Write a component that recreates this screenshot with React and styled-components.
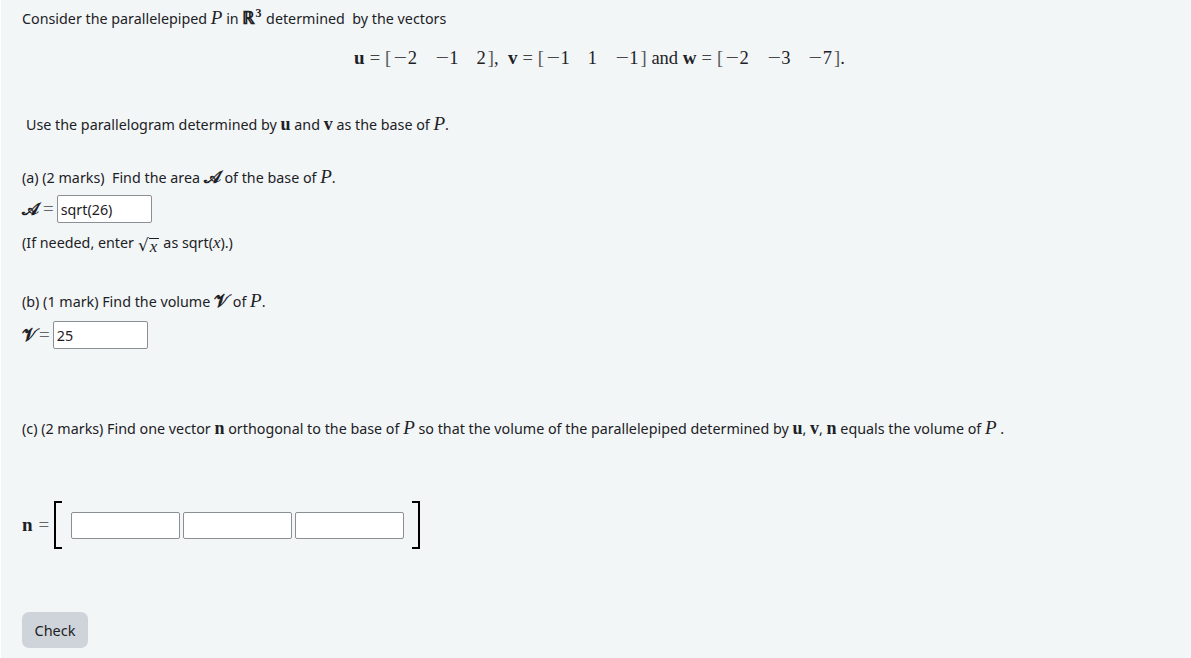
import React from "react";
import styled, { createGlobalStyle } from "styled-components";

const GlobalStyle = createGlobalStyle`
  html, body { margin: 0; padding: 0; background: #f2f6f7; }
  body { font-family: "Noto Sans", "Open Sans", sans-serif; color: #1d2125; }
`;

const Page = styled.div`
  min-height: 658px;
  box-sizing: border-box;
  padding: 8px 22px 8px 21px;
  background: #f2f6f7;
  border-left: 1px solid #ffffff;
  font-size: 14.3px;
`;

const Para = styled.div`
  line-height: 22px;
  height: 22px;
  margin-top: ${(p) => p.$mt || 0}px;
  padding-left: ${(p) => p.$indent || 0}px;
  white-space: pre;
`;

const Display = styled.div`
  margin-top: ${(p) => p.$mt || 0}px;
  line-height: 24px;
  height: 24px;
  text-align: center;
  font-family: "Liberation Serif", "DejaVu Serif", serif;
  font-size: 18.5px;
  white-space: pre;
  padding-left: 8px;
`;

const MI = styled.span`
  font-family: "Liberation Serif", "DejaVu Serif", serif;
  font-style: italic;
  font-size: ${(p) => p.$size || 19}px;
  line-height: 0;
`;

const MB = styled.span`
  font-family: "Liberation Serif", "DejaVu Serif", serif;
  font-weight: bold;
  font-size: ${(p) => p.$size || 18}px;
  line-height: 0;
`;

const MR = styled.span`
  font-family: "Liberation Serif", "DejaVu Serif", serif;
  line-height: 0;
  margin: 0 ${(p) => p.$space || 0}px;
  color: #444;
`;

const Cal = styled.span`
  font-family: "DejaVu Serif", "DejaVu Sans", serif;
  font-size: 18px;
  font-weight: bold;
  line-height: 0;
`;

const Sup = styled.sup`
  font-family: "Liberation Serif", serif;
  font-weight: bold;
  font-size: 12px;
  vertical-align: 7px;
  line-height: 0;
  margin-right: 1px;
`;

const Entry = styled.span`
  display: inline-block;
  padding: 0 ${(p) => p.$r ?? 9}px 0 ${(p) => p.$l ?? 9}px;
`;

const Minus = styled.span`
  display: inline-block;
  width: 0.78em;
  text-align: center;
  transform: scaleX(1.3);
`;

const Bracket = styled.span`
  color: #555;
`;

const AnswerRow = styled.div`
  display: flex;
  align-items: center;
  margin-top: ${(p) => p.$mt || 0}px;
  height: 28px;
`;

const Eq = styled.span`
  font-family: "Liberation Serif", serif;
  font-size: 19px;
  color: #666;
  margin: 0 ${(p) => p.$r ?? 2}px 0 ${(p) => p.$l ?? 4}px;
`;

const TextInput = styled.input`
  box-sizing: border-box;
  width: ${(p) => p.$w || 95}px;
  height: ${(p) => p.$h || 28}px;
  border: 1px solid #8a8f94;
  border-radius: 2px;
  background: #fff;
  font-family: "Noto Sans", sans-serif;
  font-size: 14.3px;
  color: #1d2125;
  padding: 0 3px;
  outline: none;
`;

const SqrtWrap = styled.span`
  font-family: "DejaVu Serif", serif;
  display: inline-flex;
  align-items: flex-start;
  margin: 0 4px 0 4px;
  line-height: 0;
  vertical-align: -3px;
`;

const SqrtSign = styled.span`
  font-size: 17px;
  line-height: 18px;
`;

const Radicand = styled.span`
  border-top: 1px solid #1d2125;
  font-family: "Liberation Serif", serif;
  font-style: italic;
  font-size: 17px;
  line-height: 16px;
  padding: 0 2px 0 1px;
  margin-top: 2px;
`;

const MatrixRow = styled.div`
  display: flex;
  align-items: center;
  margin-top: ${(p) => p.$mt || 0}px;
  height: 48px;
`;

const BigBracket = styled.span`
  box-sizing: border-box;
  width: 8px;
  height: 48px;
  border: 2.5px solid #000;
  ${(p) => (p.$side === "left" ? "border-right: none;" : "border-left: none;")}
`;

const Cells = styled.div`
  display: flex;
  gap: 3px;
  margin: 0 8px 0 9px;
`;

const CheckButton = styled.button`
  display: block;
  margin-top: ${(p) => p.$mt || 0}px;
  width: 66px;
  height: 36px;
  border: none;
  border-radius: 7px;
  background: #ced4da;
  color: #1d2125;
  font-family: "Noto Sans", sans-serif;
  font-size: 14.5px;
  padding: 0;
`;

const M = () => <Minus>−</Minus>;

function RowVec({ values }) {
  return (
    <>
      <Bracket>[</Bracket>
      {values.map((v, i) => (
        <Entry key={i} $l={i === 0 ? 2 : 9} $r={i === values.length - 1 ? 2 : 9}>
          {v.startsWith("-") ? (
            <>
              <M />
              {v.slice(1)}
            </>
          ) : (
            v
          )}
        </Entry>
      ))}
      <Bracket>]</Bracket>
    </>
  );
}

export default function App() {
  return (
    <>
      <GlobalStyle />
      <Page>
        <Para>
          Consider the parallelepiped <MI>P</MI> in <MB>ℝ</MB>
          <Sup>3</Sup> determined{"  "}by the vectors
        </Para>
        <Display $mt={16}>
          <MB $size={19}>u</MB>
          <MR $space={5}>=</MR>
          <RowVec values={["-2", "-1", "2"]} />,{"  "}
          <MB $size={19}>v</MB>
          <MR $space={5}>=</MR>
          <RowVec values={["-1", "1", "-1"]} /> and <MB $size={19}>w</MB>
          <MR $space={5}>=</MR>
          <RowVec values={["-2", "-3", "-7"]} />.
        </Display>
        <Para $mt={44} $indent={4}>
          Use the parallelogram determined by <MB>u</MB> and <MB>v</MB> as the base of <MI>P</MI>.
        </Para>
        <Para $mt={31}>
          (a) (2 marks){"  "}Find the area <Cal>𝒜</Cal> of the base of <MI>P</MI>.
        </Para>
        <AnswerRow $mt={6}>
          <Cal>𝒜</Cal>
          <Eq $l={4} $r={3}>=</Eq>
          <TextInput defaultValue="sqrt(26)" $w={95} />
        </AnswerRow>
        <Para $mt={9}>
          (If needed, enter
          <SqrtWrap>
            <SqrtSign>√</SqrtSign>
            <Radicand>x</Radicand>
          </SqrtWrap>
          as sqrt(<MI $size={17}>x</MI>).)
        </Para>
        <Para $mt={37}>
          (b) (1 mark) Find the volume <Cal>𝒱</Cal> of <MI>P</MI>.
        </Para>
        <AnswerRow $mt={8}>
          <Cal>𝒱</Cal>
          <Eq $l={2} $r={3}>=</Eq>
          <TextInput defaultValue="25" $w={95} />
        </AnswerRow>
        <Para $mt={69}>
          (c) (2 marks) Find one vector <MB>n</MB> orthogonal to the base of <MI>P</MI> so that the volume of the parallelepiped determined by <MB>u</MB>, <MB>v</MB>, <MB>n</MB> equals the volume of <MI>P</MI> .
        </Para>
        <MatrixRow $mt={61}>
          <MB $size={19}>n</MB>
          <Eq $l={6} $r={5}>=</Eq>
          <BigBracket $side="left" />
          <Cells>
            <TextInput $w={109} $h={27} />
            <TextInput $w={109} $h={27} />
            <TextInput $w={109} $h={27} />
          </Cells>
          <BigBracket $side="right" />
        </MatrixRow>
        <CheckButton $mt={63}>Check</CheckButton>
      </Page>
    </>
  );
}
